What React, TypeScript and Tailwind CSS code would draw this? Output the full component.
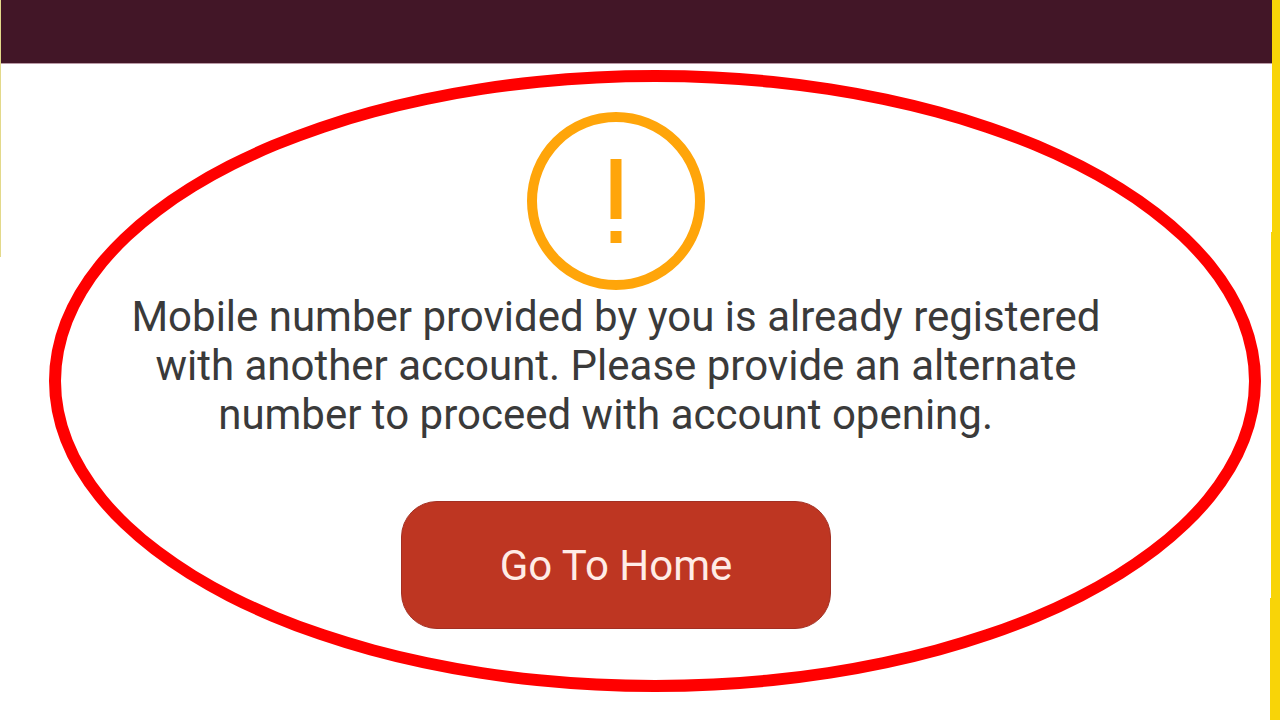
function WarningIcon() {
  return (
    <svg
      viewBox="0 0 178 178"
      className="w-[178px] h-[178px] text-[#ffa50a]"
      fill="none"
      stroke="currentColor"
      role="img"
      aria-label="Warning"
    >
      <circle cx="89" cy="89" r="84" strokeWidth="10" />
      <path d="M89 47V107M89 119V131" strokeWidth="11" />
    </svg>
  );
}

export default function App() {
  return (
    <div className="relative min-h-screen flex flex-col overflow-hidden bg-white font-['Roboto',sans-serif]">
      <div className="flex flex-1">
        <div className="w-px h-[257px] bg-[#e3d98a]" />

        <div className="flex-1 flex flex-col">
          <header className="h-16 bg-[#421627] border-b border-[#b99aa6]" />

          <main className="flex flex-col items-center pt-12 pr-[41px]">
            <WarningIcon />

            <p className="mt-[2px] text-center text-[42px] leading-[49px] text-[#3a3a3a]">
              Mobile number provided by you is already registered
              <br />
              with another account. Please provide an alternate
              <br />
              number to proceed with account opening.&nbsp;&nbsp;
            </p>

            <button
              type="button"
              className="mt-[62px] w-[430px] h-[128px] rounded-[36px] border border-[#a33023] bg-[#be3622] text-[42px] text-[#ffece6]"
            >
              Go To Home
            </button>
          </main>
        </div>

        {/* side strip, gets a little wider towards the bottom */}
        <div className="w-2 flex flex-col items-end">
          <div className="w-2 h-[232px] shrink-0 bg-[#f8d408]" />
          <div className="w-[9px] flex-3 shrink-0 bg-[#f8d408]" />
          <div className="w-[10px] flex-1 shrink-0 bg-[#f8d408]" />
        </div>
      </div>

      {/* red marker ring over the message */}
      <div className="absolute left-[49px] right-[19px] top-[70px] h-[622px] rounded-[50%] border-[12px] border-[#ff0000] pointer-events-none" />
    </div>
  );
}
